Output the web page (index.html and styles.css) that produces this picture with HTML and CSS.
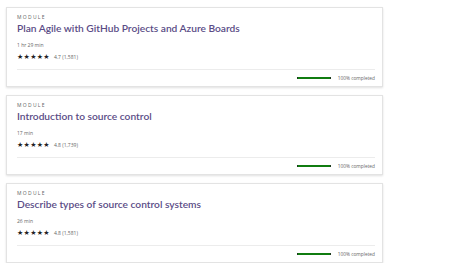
FILE: index.html
```html
<!DOCTYPE html>
<html lang="en">
<head>
    <meta charset="UTF-8">
    <title>Modules</title>
    <link rel="stylesheet" href="styles.css">
</head>
<body>
    <div class="module-list">
        <div class="module-card">
            <div class="module-type">MODULE</div>
            <div class="module-title">Plan Agile with GitHub Projects and Azure Boards</div>
            <div class="module-duration">1 hr 29 min</div>
            <div class="module-rating">
                <span class="stars">★★★★★</span>
                <span class="rating-text">4.7 (1,581)</span>
            </div>
            <div class="module-footer">
                <div class="progress-bar"></div>
                <span class="progress-text">100% completed</span>
            </div>
        </div>

        <div class="module-card">
            <div class="module-type">MODULE</div>
            <div class="module-title">Introduction to source control</div>
            <div class="module-duration">17 min</div>
            <div class="module-rating">
                <span class="stars">★★★★★</span>
                <span class="rating-text">4.8 (1,739)</span>
            </div>
            <div class="module-footer">
                <div class="progress-bar"></div>
                <span class="progress-text">100% completed</span>
            </div>
        </div>

        <div class="module-card">
            <div class="module-type">MODULE</div>
            <div class="module-title">Describe types of source control systems</div>
            <div class="module-duration">26 min</div>
            <div class="module-rating">
                <span class="stars">★★★★★</span>
                <span class="rating-text">4.8 (1,581)</span>
            </div>
            <div class="module-footer">
                <div class="progress-bar"></div>
                <span class="progress-text">100% completed</span>
            </div>
        </div>
    </div>
</body>
</html>
```

FILE: styles.css
```css
body {
    font-family: 'Open Sans', sans-serif;
    background-color: #fff;
    margin: 0;
    padding: 7px 0 0 6px;
    color: #171717;
}

.module-list {
    display: flex;
    flex-direction: column;
    gap: 8px;
    width: 377px;
}

.module-card {
    background-color: #fff;
    border: 1px solid #e3e3e3;
    box-shadow: 0 1px 2px rgba(0, 0, 0, 0.12);
    padding: 5px 7px 0 10px;
    height: 73px;
}

.module-type {
    font-size: 5px;
    letter-spacing: 1.3px;
    color: #666;
    line-height: 8px;
}

.module-title {
    font-family: 'Lato', sans-serif;
    font-size: 10.2px;
    font-weight: 600;
    color: #5a4c86;
    line-height: 15px;
}

.module-duration {
    font-size: 5px;
    color: #666;
    margin-top: 5px;
    line-height: 9px;
}

.module-rating {
    display: flex;
    align-items: center;
    gap: 4px;
    margin-top: 3px;
    line-height: 9px;
}

.stars {
    font-family: 'DejaVu Sans', sans-serif;
    font-size: 7px;
    letter-spacing: 0.3px;
    color: #222;
}

.rating-text {
    font-size: 5px;
    color: #666;
}

.module-footer {
    display: flex;
    justify-content: flex-end;
    align-items: center;
    gap: 7px;
    border-top: 1px solid #ececec;
    margin-top: 7px;
    height: 15px;
}

.progress-bar {
    width: 32px;
    height: 2px;
    background-color: #107c10;
    border-left: 1px solid #1e3a1e;
    border-right: 1px solid #1e3a1e;
}

.progress-text {
    font-size: 4.8px;
    color: #666;
}
```
